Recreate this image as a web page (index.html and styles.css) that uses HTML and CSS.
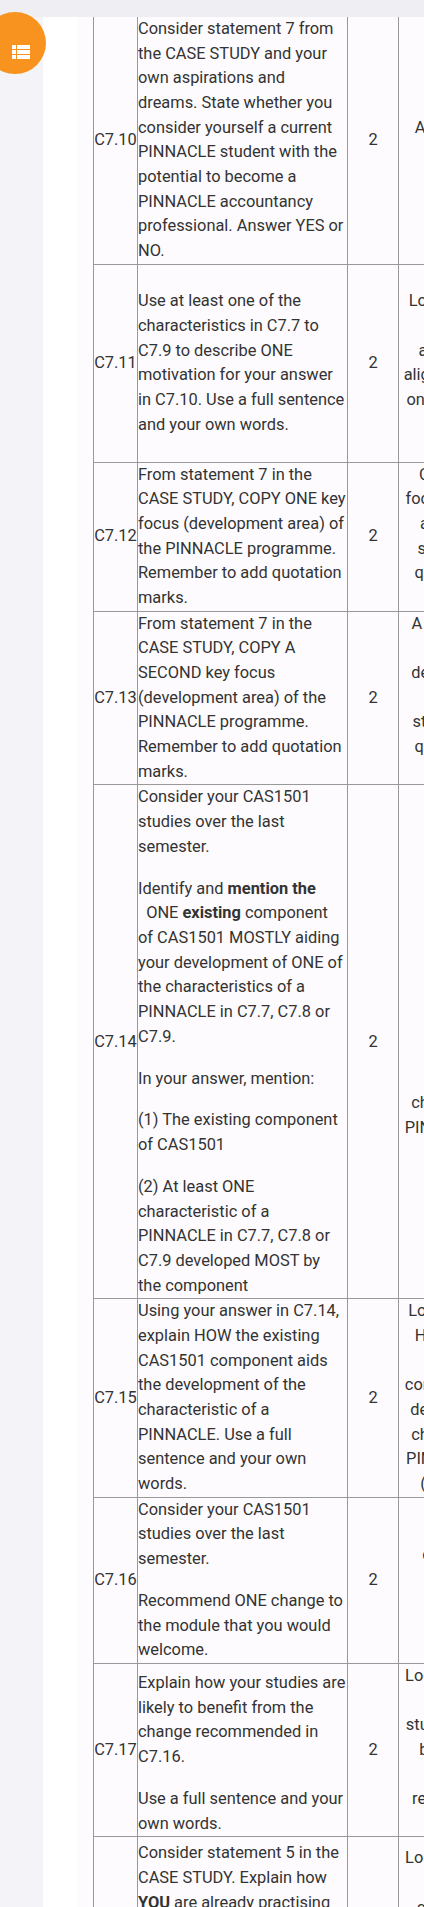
FILE: index.html
```html
<!DOCTYPE html>
<html lang="en">
<head>
<meta charset="utf-8">
<title>CAS1501 questions</title>
<link rel="stylesheet" href="styles.css">
</head>
<body>
<header class="topbar"></header>
<div class="layout">
  <aside class="rail"></aside>
  <div class="gutter"></div>
  <main class="content">
    <table class="qtable">
      <colgroup>
        <col class="c-num"><col class="c-q"><col class="c-mark"><col class="c-rub">
      </colgroup>
      <tbody>
        <tr>
          <td class="num">C7.10</td>
          <td class="q">Consider statement 7 from the CASE STUDY and your own aspirations and dreams. State whether you consider yourself a current PINNACLE student with the potential to become a PINNACLE accountancy professional. Answer YES or NO.</td>
          <td class="mark">2</td>
          <td class="rub">A clear YES or NO reply<br>is given.</td>
        </tr>
        <tr>
          <td class="num">C7.11</td>
          <td class="q">Use at least one of the characteristics in C7.7 to C7.9 to describe ONE motivation for your answer in C7.10. Use a full sentence and your own words.</td>
          <td class="mark">2</td>
          <td class="rub">Look for a<br>Logical motivation of the<br>clearly linked<br>and the answer is well<br>aligned with the answer to<br>one characteristic in C7.7<br>to C7.9.<br>(2 marks)</td>
        </tr>
        <tr>
          <td class="num">C7.12</td>
          <td class="q">From statement 7 in the CASE STUDY, COPY ONE key focus (development area) of the PINNACLE programme. Remember to add quotation marks.</td>
          <td class="mark">2</td>
          <td class="rub">Copied ONE exact key<br>focus (development area)<br>as written in the case,<br>study (statement 7), in<br>quotation marks added<br>correctly.</td>
        </tr>
        <tr>
          <td class="num">C7.13</td>
          <td class="q">From statement 7 in the CASE STUDY, COPY A SECOND key focus (development area) of the PINNACLE programme. Remember to add quotation marks.</td>
          <td class="mark">2</td>
          <td class="rub">A SECOND, different key<br>focus (the<br>development area) used<br>exactly as<br>stated in the case study<br>quotation marks added<br>correctly.</td>
        </tr>
        <tr>
          <td class="num">C7.14</td>
          <td class="q">
            <p>Consider your CAS1501 studies over the last semester.</p>
            <p>Identify and <strong>mention the</strong> &nbsp;&nbsp;ONE <strong>existing</strong> component of CAS1501 MOSTLY aiding your development of ONE of the characteristics of a PINNACLE in C7.7, C7.8 or C7.9.</p>
            <p>In your answer, mention:</p>
            <p>(1) The existing component of CAS1501</p>
            <p>(2) At least ONE characteristic of a PINNACLE in C7.7, C7.8 or C7.9 developed MOST by the component</p>
          </td>
          <td class="mark">2</td>
          <td class="rub">Look for:<br>(1) ONE existing<br>component of<br>CAS1501 that is<br>correctly identified<br>and explained;<br>(2) ONE<br>chosen characteristic of<br>PINNACLE in C7.7 to C7.9<br>is mentioned.</td>
        </tr>
        <tr>
          <td class="num">C7.15</td>
          <td class="q">Using your answer in C7.14, explain HOW the existing CAS1501 component aids the development of the characteristic of a PINNACLE. Use a full sentence and your own words.</td>
          <td class="mark">2</td>
          <td class="rub">Logical explanation as to<br>HOW the given existing<br>CAS1501 learning<br>component contributes to<br>developing the identified<br>characteristic of being a<br>PINNACLE. Full sentence,<br>(own words are used)</td>
        </tr>
        <tr>
          <td class="num">C7.16</td>
          <td class="q">
            <p>Consider your CAS1501 studies over the last semester.</p>
            <p>Recommend ONE change to the module that you would welcome.</p>
          </td>
          <td class="mark">2</td>
          <td class="rub">clear, valid change, is<br>recommended.<br>(2 marks)</td>
        </tr>
        <tr>
          <td class="num">C7.17</td>
          <td class="q q-low">
            <p>Explain how your studies are likely to benefit from the change recommended in C7.16.</p>
            <p>Use a full sentence and your own words.</p>
          </td>
          <td class="mark">2</td>
          <td class="rub">Logical explanation of the<br>way the<br>student's own studies will<br>benefit from a change<br>that was<br>recommended in C7.16.<br>(2 marks)</td>
        </tr>
        <tr>
          <td class="num">C7.18</td>
          <td class="q q-top">Consider statement 5 in the CASE STUDY. Explain how <strong>YOU</strong> are already practising ONE of the habits of a PINNACLE described in this statement. Use a full sentence and your own words.</td>
          <td class="mark">2</td>
          <td class="rub rub-top">Logical explanation of the<br>way the<br>candidate is practising<br>ONE habit of a<br>PINNACLE.<br>(2 marks)</td>
        </tr>
      </tbody>
    </table>
  </main>
</div>
<button class="fab" type="button" aria-label="Contents">
  <svg class="fab-icon" width="24" height="24" viewBox="0 0 24 24" aria-hidden="true"><path d="M3 14h4v-4H3v4zm0 5h4v-4H3v4zM3 9h4V5H3v4zm5 5h13v-4H8v4zm0 5h13v-4H8v4zM8 5v4h13V5H8z"/></svg>
</button>
</body>
</html>
```
FILE: styles.css
```css
html, body {
  margin: 0;
  padding: 0;
}
body {
  background: #fdfbfe;
  font-family: Roboto, "Liberation Sans", Arial, sans-serif;
  color: #333;
  overflow: hidden;
}
.topbar {
  height: 17px;
  background: #efeef3;
}
.layout {
  display: flex;
  align-items: stretch;
  min-height: 1890px;
}
.rail {
  flex: 0 0 43px;
  background: #f4f3f8;
}
.gutter {
  flex: 0 0 34px;
  background: #ffffff;
}
.content {
  flex: 1 1 auto;
  min-width: 0;
  overflow: hidden;
  padding-left: 16px;
  background: #fdfbfe;
}
.qtable {
  border-collapse: collapse;
  table-layout: fixed;
  width: 506px;
  font-size: 16.4px;
  line-height: 24.65px;
}
.c-num { width: 44px; }
.c-q { width: 210px; }
.c-mark { width: 51px; }
.c-rub { width: 201px; }
.qtable td {
  border: 1px solid #999;
  padding: 0;
  vertical-align: middle;
}
.qtable tr:first-child td {
  border-top: none;
}
.num {
  text-align: center;
  white-space: nowrap;
}
.mark {
  text-align: center;
}
.q p {
  margin: 0 0 17.3px;
}
.q p:last-child {
  margin-bottom: 0;
}
.q strong {
  font-weight: 700;
}
.q-low {
  padding-top: 7px !important;
}
.q-top {
  vertical-align: top !important;
  padding-top: 4px !important;
}
.rub {
  text-align: center;
  white-space: nowrap;
}
.rub-top {
  vertical-align: top !important;
  padding-top: 9px !important;
}
.fab {
  position: absolute;
  left: -16px;
  top: 12px;
  width: 62px;
  height: 62px;
  border: none;
  border-radius: 50%;
  background: #f7931e;
  padding: 18px 0 0 25px;
  margin: 0;
  display: block;
  text-align: left;
}
.fab-icon {
  display: block;
  fill: #ffffff;
}
```
